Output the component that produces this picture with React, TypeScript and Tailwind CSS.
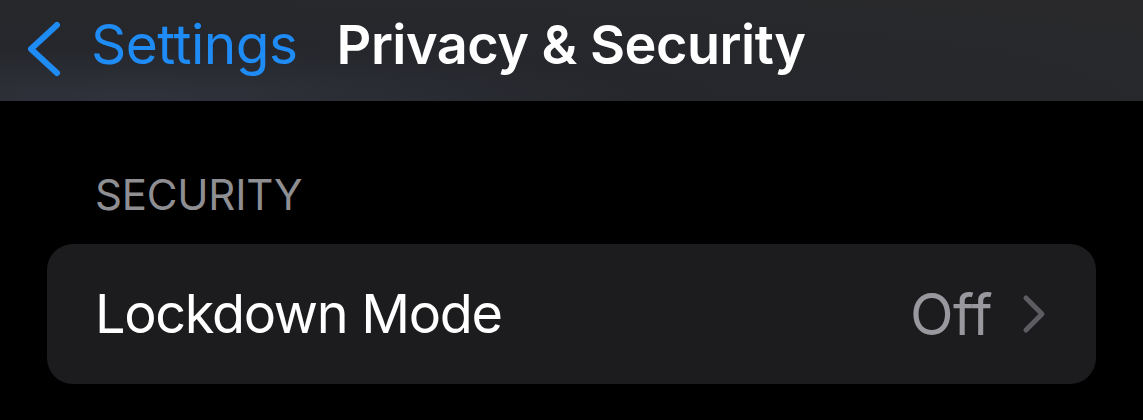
import React from 'react';

const font = { fontFamily: 'Inter, "Noto Sans", sans-serif' };

function BackChevron() {
    return (
        <svg width="40" height="56" viewBox="0 0 40 56" fill="none" stroke="currentColor" strokeWidth="6" strokeLinecap="round" strokeLinejoin="round">
            <polyline points="32,4 6,28 32,52" />
        </svg>
    );
}

function RowChevron() {
    return (
        <svg width="28" height="40" viewBox="0 0 28 40" fill="none" stroke="currentColor" strokeWidth="5" strokeLinecap="round" strokeLinejoin="round">
            <polyline points="6,4 22,20 6,36" />
        </svg>
    );
}

export default function App() {
    return (
        <div className="w-[1143px] h-[420px] bg-black overflow-hidden" style={font}>
            <div className="h-[101px] flex items-center bg-[radial-gradient(ellipse_at_12%_95%,#2f323b_0%,#25272c_35%,#29292b_100%)]">
                <div className="flex items-center pl-[25px] text-[#1f8bf5] pb-[4px]">
                    <BackChevron />
                    <span className="ml-[26px] text-[55px] leading-none tracking-[-0.5px] pb-[8px]">Settings</span>
                </div>
                <span className="ml-[39px] text-[54px] leading-none font-semibold text-white tracking-[-0.5px] pb-[12px]">Privacy &amp; Security</span>
            </div>

            <div className="px-[47px] pt-[73px]">
                <div className="pl-[48px] text-[42px] leading-none text-[#8e8e93] tracking-[-0.2px]">SECURITY</div>
                <div className="mt-[28px] h-[140px] w-[1049px] rounded-[26px] bg-[#1c1c1e] flex items-center pl-[48px] pr-[48px]">
                    <span className="text-[54px] leading-none text-white tracking-[-1.3px]">Lockdown Mode</span>
                    <span className="ml-auto text-[57px] leading-none text-[#98989e] tracking-[-0.5px]">Off</span>
                    <span className="ml-[28px] text-[#5c5c61]">
                        <RowChevron />
                    </span>
                </div>
            </div>
        </div>
    );
}
